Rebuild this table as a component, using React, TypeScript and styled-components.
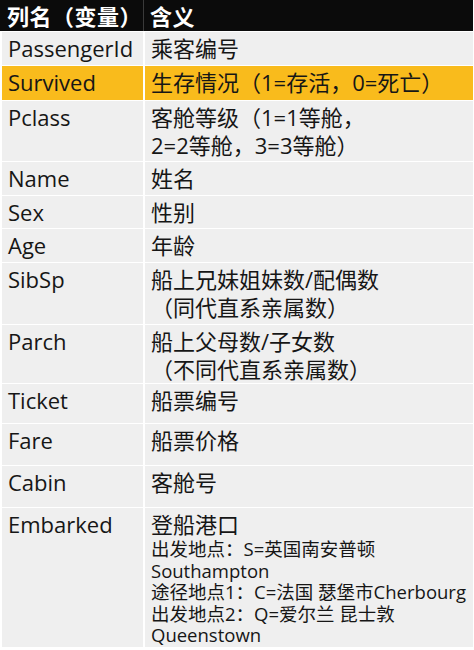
import React from 'react';
import styled, { createGlobalStyle } from 'styled-components';

const GlobalStyle = createGlobalStyle`
  html, body {
    margin: 0;
    padding: 0;
    background: #ffffff;
  }
  body {
    font-family: 'Open Sans', 'Noto Sans CJK SC', sans-serif;
    -webkit-font-smoothing: antialiased;
  }
`;

const Table = styled.div`
  width: 474px;
  box-sizing: border-box;
  padding: 0 1px 0 2px;
  display: flex;
  flex-direction: column;
  gap: 1px;
  background: #ffffff;
`;

const HeaderRow = styled.div`
  display: grid;
  grid-template-columns: 143px 1fr;
  column-gap: 1px;
  height: 31px;
  background: #3a3a3a;
  margin-left: -2px;
`;

const HeaderCell = styled.div<{ $pad?: number }>`
  background: #0b0b0b;
  color: #ffffff;
  font-family: 'Noto Sans CJK SC', sans-serif;
  font-weight: 700;
  font-size: 22px;
  letter-spacing: 0.5px;
  line-height: 31px;
  padding-left: ${(p) => p.$pad ?? 7}px;
  white-space: nowrap;
`;

const Row = styled.div<{ $h: number }>`
  display: grid;
  grid-template-columns: 141px 1fr;
  column-gap: 2px;
  height: ${(p) => p.$h}px;
`;

const Cell = styled.div<{ $hl?: boolean }>`
  background: ${(p) => (p.$hl ? '#f9bb1c' : '#efefef')};
  color: #161616;
  font-size: 22px;
  line-height: 28px;
  padding: 2px 0 0 6px;
  white-space: nowrap;
`;

const Sub = styled.div`
  font-size: 18.5px;
  line-height: 21.5px;
`;

type Item = { name: string; desc: React.ReactNode; h: number; hl?: boolean };

const items: Item[] = [
  { name: 'PassengerId', desc: '乘客编号', h: 33 },
  { name: 'Survived', desc: '生存情况（1=存活，0=死亡）', h: 34, hl: true },
  {
    name: 'Pclass',
    desc: (
      <>
        客舱等级（1=1等舱，
        <br />
        2=2等舱，3=3等舱）
      </>
    ),
    h: 60,
  },
  { name: 'Name', desc: '姓名', h: 33 },
  { name: 'Sex', desc: '性别', h: 32 },
  { name: 'Age', desc: '年龄', h: 33 },
  {
    name: 'SibSp',
    desc: (
      <>
        船上兄妹姐妹数/配偶数
        <br />
        （同代直系亲属数）
      </>
    ),
    h: 61,
  },
  {
    name: 'Parch',
    desc: (
      <>
        船上父母数/子女数
        <br />
        （不同代直系亲属数）
      </>
    ),
    h: 58,
  },
  { name: 'Ticket', desc: '船票编号', h: 39 },
  { name: 'Fare', desc: '船票价格', h: 41 },
  { name: 'Cabin', desc: '客舱号', h: 41 },
  {
    name: 'Embarked',
    desc: (
      <>
        登船港口
        <Sub>
          出发地点：S=英国南安普顿
          <br />
          Southampton
          <br />
          途径地点1：C=法国 瑟堡市Cherbourg
          <br />
          出发地点2：Q=爱尔兰 昆士敦
          <br />
          Queenstown
        </Sub>
      </>
    ),
    h: 139,
  },
];

export default function App() {
  return (
    <>
      <GlobalStyle />
      <Table>
        <HeaderRow>
          <HeaderCell>列名（变量）</HeaderCell>
          <HeaderCell $pad={6}>含义</HeaderCell>
        </HeaderRow>
        {items.map((it) => (
          <Row key={it.name} $h={it.h}>
            <Cell $hl={it.hl}>{it.name}</Cell>
            <Cell $hl={it.hl}>{it.desc}</Cell>
          </Row>
        ))}
      </Table>
    </>
  );
}
